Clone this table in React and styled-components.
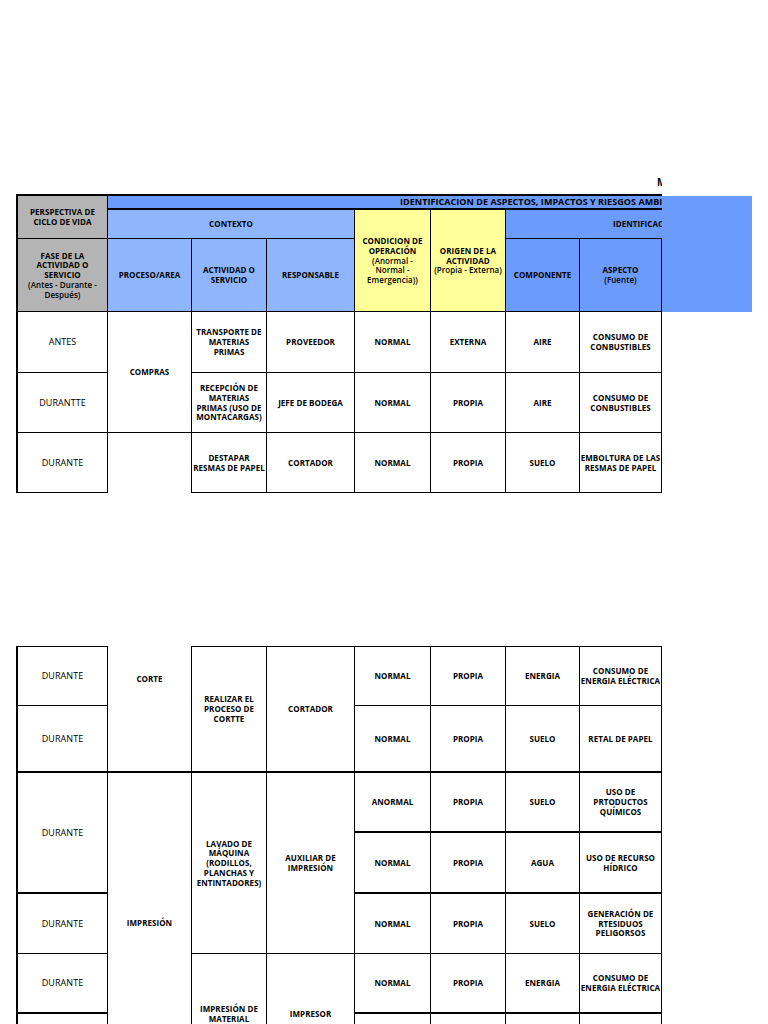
import React from 'react';
import styled, { createGlobalStyle } from 'styled-components';

const GRAY = '#b4b4b4';
const BLUE = '#6b9bfd';
const LIGHT = '#8fb5fd';
const YELLOW = '#ffff99';

const GlobalStyle = createGlobalStyle`
  html, body {
    margin: 0;
    padding: 0;
    background: #fff;
  }
  body {
    font-family: "Open Sans", "Liberation Sans", sans-serif;
    color: #000;
  }
`;

const Page = styled.div`
  padding: 170px 0 0 16px;
  width: 768px;
  box-sizing: border-box;
`;

const Title = styled.div`
  width: 646px;
  box-sizing: border-box;
  padding-left: 641px;
  overflow: hidden;
  white-space: nowrap;
  font-size: 10px;
  font-weight: 700;
  line-height: 24px;
`;

const TopRow = styled.div`
  display: flex;
  align-items: flex-start;
`;

const Clip = styled.div`
  width: 646px;
  overflow: hidden;
  flex-shrink: 0;
`;

const BlueBlock = styled.div`
  width: 90px;
  height: 116px;
  margin-top: 2px;
  background: ${BLUE};
`;

const Grid = styled.div`
  display: grid;
  grid-template-columns: 90px 84px 75px 88px 76px 75px 74px 82px;
  grid-template-rows: ${p => p.$rows};
  border-left: 2px solid #000;
  border-top: ${p => (p.$top ? '2px solid #000' : 'none')};
  margin-top: ${p => p.$gap || 0}px;
  width: 646px;
  box-sizing: border-box;
`;

const Cell = styled.div`
  grid-column: ${p => p.$c};
  grid-row: ${p => p.$r};
  box-sizing: border-box;
  background: ${p => p.$bg || '#fff'};
  border-right: ${p => (p.$noRight ? 'none' : '1px solid #000')};
  border-bottom: ${p => (p.$noBottom ? 'none' : p.$thick ? '2px solid #000' : '1px solid #000')};
  border-top: ${p => (p.$top ? '1px solid #000' : 'none')};
  display: flex;
  align-items: ${p => (p.$pt ? 'flex-start' : 'center')};
  justify-content: ${p => (p.$lead ? 'flex-start' : 'center')};
  padding-left: ${p => p.$lead || 0}px;
  padding-top: ${p => p.$pt || 0}px;
  overflow: ${p => (p.$lead ? 'hidden' : 'visible')};
  min-width: 0;
`;

const Text = styled.div`
  text-align: center;
  white-space: pre;
  font-size: ${p => (p.$plain ? '9px' : p.$big ? '9px' : '8px')};
  font-weight: ${p => (p.$plain ? 400 : 700)};
  line-height: 9.8px;
  letter-spacing: 0.05px;
`;

const Sub = styled.span`
  font-weight: 600;
`;

const topCells = [
  { c: '1', r: '1 / span 2', t: 'PERSPECTIVA DE\nCICLO DE VIDA', bg: GRAY },
  { c: '2 / span 7', r: '1', t: 'IDENTIFICACION DE ASPECTOS, IMPACTOS Y RIESGOS AMBIENTALES', bg: BLUE, lead: 292, thick: true, noRight: true, big: true },
  { c: '2 / span 3', r: '2', t: 'CONTEXTO', bg: LIGHT },
  { c: '5', r: '2 / span 2', t: <>CONDICION DE{'\n'}OPERACIÓN{'\n'}<Sub>(Anormal -{'\n'}Normal -{'\n'}Emergencia))</Sub></>, bg: YELLOW },
  { c: '6', r: '2 / span 2', t: <>ORIGEN DE LA{'\n'}ACTIVIDAD{'\n'}<Sub>(Propia - Externa)</Sub></>, bg: YELLOW },
  { c: '7 / span 2', r: '2', t: 'IDENTIFICACIÓN DEL ASPECTO AMBIENTAL', bg: BLUE, lead: 107, noRight: true },
  { c: '1', r: '3', t: <>FASE DE LA{'\n'}ACTIVIDAD O{'\n'}SERVICIO{'\n'}<Sub>(Antes - Durante -{'\n'}Después)</Sub></>, bg: GRAY },
  { c: '2', r: '3', t: 'PROCESO/AREA', bg: LIGHT },
  { c: '3', r: '3', t: 'ACTIVIDAD O\nSERVICIO', bg: LIGHT },
  { c: '4', r: '3', t: 'RESPONSABLE', bg: LIGHT },
  { c: '7', r: '3', t: 'COMPONENTE', bg: BLUE },
  { c: '8', r: '3', t: <>ASPECTO{'\n'}<Sub>(Fuente)</Sub></>, bg: BLUE },

  { c: '1', r: '4', t: 'ANTES', plain: true },
  { c: '2', r: '4 / span 2', t: 'COMPRAS' },
  { c: '3', r: '4', t: 'TRANSPORTE DE\nMATERIAS\nPRIMAS' },
  { c: '4', r: '4', t: 'PROVEEDOR' },
  { c: '5', r: '4', t: 'NORMAL' },
  { c: '6', r: '4', t: 'EXTERNA' },
  { c: '7', r: '4', t: 'AIRE' },
  { c: '8', r: '4', t: 'CONSUMO DE\nCONBUSTIBLES' },

  { c: '1', r: '5', t: 'DURANTTE', plain: true },
  { c: '3', r: '5', t: 'RECEPCIÓN DE\nMATERIAS\nPRIMAS (USO DE\nMONTACARGAS)' },
  { c: '4', r: '5', t: 'JEFE DE BODEGA' },
  { c: '5', r: '5', t: 'NORMAL' },
  { c: '6', r: '5', t: 'PROPIA' },
  { c: '7', r: '5', t: 'AIRE' },
  { c: '8', r: '5', t: 'CONSUMO DE\nCONBUSTIBLES' },

  { c: '1', r: '6', t: 'DURANTE', plain: true },
  { c: '2', r: '6', t: '', noBottom: true },
  { c: '3', r: '6', t: 'DESTAPAR\nRESMAS DE PAPEL' },
  { c: '4', r: '6', t: 'CORTADOR' },
  { c: '5', r: '6', t: 'NORMAL' },
  { c: '6', r: '6', t: 'PROPIA' },
  { c: '7', r: '6', t: 'SUELO' },
  { c: '8', r: '6', t: 'EMBOLTURA DE LAS\nRESMAS DE PAPEL' },
];

// filas E-H de la segunda hoja
const detailRows = [
  ['NORMAL', 'PROPIA', 'ENERGIA', 'CONSUMO DE\nENERGIA ELÉCTRICA'],
  ['NORMAL', 'PROPIA', 'SUELO', 'RETAL DE PAPEL'],
  ['ANORMAL', 'PROPIA', 'SUELO', 'USO DE\nPRTODUCTOS\nQUÍMICOS'],
  ['NORMAL', 'PROPIA', 'AGUA', 'USO DE RECURSO\nHÍDRICO'],
  ['NORMAL', 'PROPIA', 'SUELO', 'GENERACIÓN DE\nRTESIDUOS\nPELIGORSOS'],
  ['NORMAL', 'PROPIA', 'ENERGIA', 'CONSUMO DE\nENERGIA ELÉCTRICA'],
  ['', '', '', ''],
];
const thickRows = [1, 2, 3, 5];

const bottomCells = [
  { c: '1', r: '1', t: 'DURANTE', plain: true, top: true },
  { c: '1', r: '2', t: 'DURANTE', plain: true, thick: true },
  { c: '1', r: '3 / span 2', t: 'DURANTE', plain: true, thick: true },
  { c: '1', r: '5', t: 'DURANTE', plain: true },
  { c: '1', r: '6', t: 'DURANTE', plain: true, thick: true },
  { c: '1', r: '7', t: '', plain: true },
  { c: '2', r: '1 / span 2', t: 'CORTE', pt: 28, thick: true },
  { c: '2', r: '3 / span 5', t: 'IMPRESIÓN' },
  { c: '3', r: '1 / span 2', t: 'REALIZAR EL\nPROCESO DE\nCORTTE', top: true, thick: true },
  { c: '3', r: '3 / span 3', t: 'LAVADO DE\nMÁQUINA\n(RODILLOS,\nPLANCHAS Y\nENTINTADORES)' },
  { c: '3', r: '6 / span 2', t: 'IMPRESIÓN DE\nMATERIAL' },
  { c: '4', r: '1 / span 2', t: 'CORTADOR', top: true, thick: true },
  { c: '4', r: '3 / span 3', t: 'AUXILIAR DE\nIMPRESIÓN' },
  { c: '4', r: '6 / span 2', t: 'IMPRESOR' },
  ...detailRows.flatMap((row, i) =>
    row.map((t, j) => ({
      c: String(5 + j),
      r: String(i + 1),
      t,
      top: i === 0,
      thick: thickRows.includes(i),
    }))
  ),
];

const renderCell = (cell, key) => (
  <Cell
    key={key}
    $c={cell.c}
    $r={cell.r}
    $bg={cell.bg}
    $lead={cell.lead}
    $pt={cell.pt}
    $thick={cell.thick}
    $top={cell.top}
    $noRight={cell.noRight}
    $noBottom={cell.noBottom}
  >
    {cell.t !== '' && (
      <Text $plain={cell.plain} $big={cell.big}>
        {cell.t}
      </Text>
    )}
  </Cell>
);

export default function App() {
  return (
    <>
      <GlobalStyle />
      <Page>
        <Clip>
          <Title>MATRIZ DE IDENTIFICACIÓN DE ASPECTOS E IMPACTOS AMBIENTALES</Title>
        </Clip>
        <TopRow>
          <Clip>
            <Grid $top $rows="14px 29px 73px 61px 60px 60px">
              {topCells.map(renderCell)}
            </Grid>
          </Clip>
          <BlueBlock />
        </TopRow>
        <Clip>
          <Grid $gap={153} $rows="60px 67px 60px 61px 60px 60px 60px">
            {bottomCells.map(renderCell)}
          </Grid>
        </Clip>
      </Page>
    </>
  );
}
